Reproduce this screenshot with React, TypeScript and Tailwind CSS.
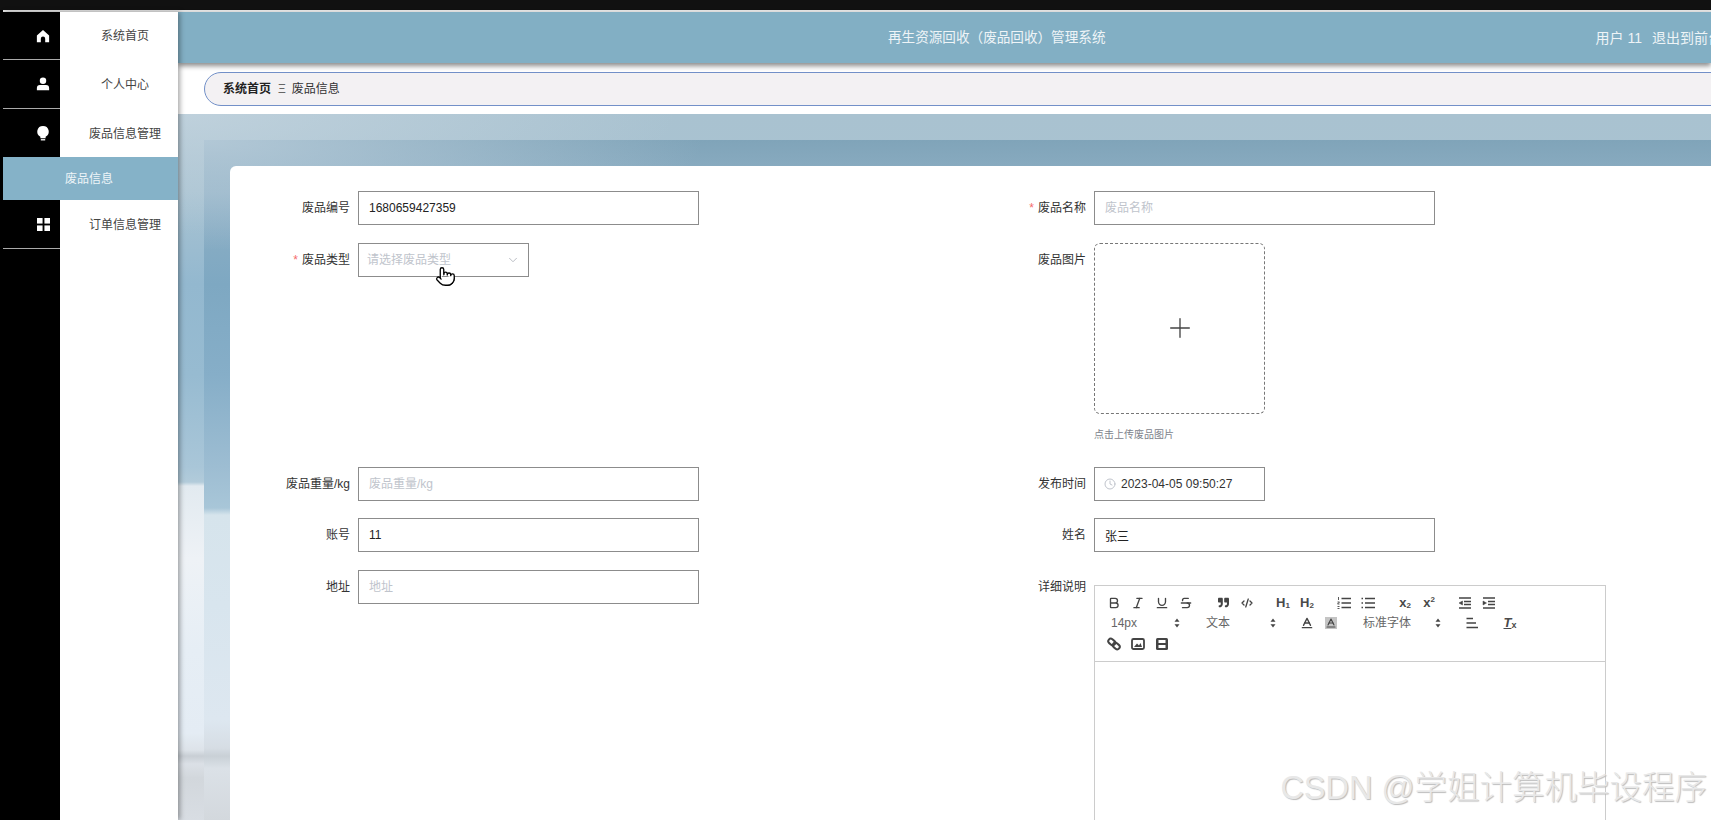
import type { ReactNode } from 'react';
import {
  Baseline,
  Bold,
  ChevronDown,
  Clock,
  CodeXml,
  Italic,
  Plus,
  Pointer,
  Strikethrough,
  Underline,
} from 'lucide-react';
import { FaQuoteRight } from 'react-icons/fa';

const HomeIcon = () => (
  <svg width="14" height="14" viewBox="0 0 16 16" fill="#fff">
    <path d="M8 1 15 7.500V15h-4.500v-4a2.500 2.500 0 0 0-5 0v4H1V7.500Z" />
  </svg>
);

const UserIcon = () => (
  <svg width="14" height="14" viewBox="0 0 16 16" fill="#fff">
    <circle cx="8" cy="4.200" r="3.700" />
    <path d="M1 15v-2.500a3.500 3.500 0 0 1 3.500-3.500h7a3.500 3.500 0 0 1 3.500 3.500V15Z" />
  </svg>
);

const BulbIcon = () => (
  <svg width="14" height="16" viewBox="0 0 16 18" fill="#fff">
    <path d="M8 1a6.500 6.500 0 0 0-3 12.300V15h6v-1.700A6.500 6.500 0 0 0 8 1Z" />
    <rect x="5.500" y="16" width="5" height="1.500" />
  </svg>
);

const GridIcon = () => (
  <svg width="13" height="13" viewBox="0 0 14 14" fill="#fff">
    <rect x="0" y="0" width="6" height="6" />
    <rect x="8" y="0" width="6" height="6" />
    <rect x="0" y="8" width="6" height="6" />
    <rect x="8" y="8" width="6" height="6" />
  </svg>
);

const PickerArrows = () => (
  <svg width="6" height="10" viewBox="0 0 6 10" fill="#444">
    <path d="M3 0.500 5.500 3.800H0.500Z" />
    <path d="M3 9.500 0.500 6.200H5.500Z" />
  </svg>
);

const OrderedListIcon = () => (
  <svg width="14" height="14" viewBox="0 0 14 14" stroke="#444" strokeWidth="1.700" fill="none">
    <path d="M4.500 2.500H14M4.500 7H14M4.500 11.500H14" />
    <path d="M1.500 1v3M0.500 6h2L0.500 8h2M0.500 10.500h2M0.500 12.500h2" strokeWidth="0.900" />
  </svg>
);

const BulletListIcon = () => (
  <svg width="14" height="14" viewBox="0 0 14 14" stroke="#444" strokeWidth="1.700" fill="none">
    <path d="M4 2.500H14M4 7H14M4 11.500H14" />
    <path d="M0.500 2.500H2M0.500 7H2M0.500 11.500H2" />
  </svg>
);

const OutdentIcon = () => (
  <svg width="14" height="14" viewBox="0 0 14 14" stroke="#444" strokeWidth="1.700" fill="none">
    <path d="M1 2H13M6 5.500H13M6 8.500H13M1 12H13" />
    <path d="M4.500 5 1 7 4.500 9Z" fill="#444" strokeWidth="0.500" />
  </svg>
);

const IndentIcon = () => (
  <svg width="14" height="14" viewBox="0 0 14 14" stroke="#444" strokeWidth="1.700" fill="none">
    <path d="M1 2H13M6 5.500H13M6 8.500H13M1 12H13" />
    <path d="M1 5 4.500 7 1 9Z" fill="#444" strokeWidth="0.500" />
  </svg>
);

const AlignIcon = () => (
  <svg width="14" height="14" viewBox="0 0 14 14" stroke="#444" strokeWidth="1.700" fill="none">
    <path d="M1.500 2.500H8M1.500 7H11M1.500 11.500H13" />
  </svg>
);

const LinkIcon = () => (
  <svg width="14" height="14" viewBox="0 0 14 14" stroke="#444" strokeWidth="2" fill="none">
    <rect x="1" y="2.500" width="7.500" height="5" rx="2.500" transform="rotate(40 4.750 5)" />
    <rect x="5.500" y="6.500" width="7.500" height="5" rx="2.500" transform="rotate(40 9.250 9)" />
  </svg>
);

const ImageIcon = () => (
  <svg width="14" height="14" viewBox="0 0 14 14" fill="none">
    <rect x="1" y="2" width="12" height="10" rx="1.500" stroke="#444" strokeWidth="1.800" />
    <path d="M3 10 6 6.500 8 8.500 9.500 6 11 10Z" fill="#444" />
  </svg>
);

const VideoIcon = () => (
  <svg width="14" height="14" viewBox="0 0 14 14">
    <rect x="1" y="1" width="12" height="12" rx="1.500" fill="#444" />
    <rect x="3.500" y="3" width="7" height="3" fill="#fff" />
    <rect x="3.500" y="8" width="7" height="3" fill="#fff" />
  </svg>
);

function MenuRow({ icon, label, tall }: { icon: ReactNode; label: string; tall?: boolean }) {
  return (
    <div className={tall ? 'flex h-[49px]' : 'flex h-[48px]'}>
      <div className="flex w-[57px] items-center justify-end border-b border-[#aaa] bg-black pr-[10px]">{icon}</div>
      <div className="flex flex-1 items-center justify-center bg-white pl-3 text-xs text-[#444]">{label}</div>
    </div>
  );
}

function Sidebar() {
  return (
    <aside className="relative z-20 flex w-[175px] shrink-0 flex-col shadow-[2px_0_5px_rgba(0,0,0,0.35)]">
      <MenuRow icon={<HomeIcon />} label="系统首页" />
      <MenuRow icon={<UserIcon />} label="个人中心" tall />
      <MenuRow icon={<BulbIcon />} label="废品信息管理" tall />
      <div className="-mt-[1px] flex h-[43px] items-center bg-[#85b2c8] pl-[62px] text-xs text-[#eef5f8]">废品信息</div>
      <MenuRow icon={<GridIcon />} label="订单信息管理" tall />
      <div className="flex flex-1">
        <div className="w-[57px] bg-black" />
        <div className="flex-1 bg-white" />
      </div>
    </aside>
  );
}

function Field({ label, required, children }: { label: string; required?: boolean; children: ReactNode }) {
  return (
    <div className="flex items-start gap-2">
      <label className="h-[34px] w-[120px] shrink-0 text-right text-xs leading-[34px] text-[#333]">
        {required && <span className="mr-1 text-[#f56c6c]">*</span>}
        {label}
      </label>
      {children}
    </div>
  );
}

function TextBox({ value, placeholder }: { value?: string; placeholder?: string }) {
  return (
    <input
      readOnly
      defaultValue={value}
      placeholder={placeholder}
      className="h-[34px] w-[341px] border border-[#8c8c8c] bg-white px-[10px] text-xs text-[#222] outline-none placeholder:text-[#c0c4cc]"
    />
  );
}

function ToolBtn({ children }: { children: ReactNode }) {
  return <span className="flex h-5 w-6 shrink-0 items-center justify-center text-[#444]">{children}</span>;
}

function Picker({ label, width }: { label: string; width: string }) {
  return (
    <span className={`flex h-5 shrink-0 items-center justify-between pl-[9px] pr-[3px] text-xs text-[#666] ${width}`}>
      {label}
      <PickerArrows />
    </span>
  );
}

function Script({ base, mark, sup }: { base: string; mark: string; sup?: boolean }) {
  return (
    <span className="flex text-[13px] font-bold leading-none text-[#4a4a4a]">
      {base}
      <span className={sup ? 'text-[8px] leading-[8px]' : 'mt-[6px] text-[8px] leading-[8px]'}>{mark}</span>
    </span>
  );
}

function Editor() {
  const s = { size: 14, strokeWidth: 2.3 };
  return (
    <div className="mt-[15px] w-[512px] border border-[#ccc]">
      <div className="h-[76px] border-b border-[#ccc] px-[7px] pt-[7px]">
        <div className="flex items-center">
          <ToolBtn><Bold {...s} /></ToolBtn>
          <ToolBtn><Italic {...s} /></ToolBtn>
          <ToolBtn><Underline {...s} /></ToolBtn>
          <ToolBtn><Strikethrough {...s} /></ToolBtn>
          <span className="w-[13px]" />
          <ToolBtn><FaQuoteRight size={11} /></ToolBtn>
          <ToolBtn><CodeXml size={12} strokeWidth={2.6} /></ToolBtn>
          <span className="w-[12px]" />
          <ToolBtn><Script base="H" mark="1" /></ToolBtn>
          <ToolBtn><Script base="H" mark="2" /></ToolBtn>
          <span className="w-[13px]" />
          <ToolBtn><OrderedListIcon /></ToolBtn>
          <ToolBtn><BulletListIcon /></ToolBtn>
          <span className="w-[13px]" />
          <ToolBtn><Script base="x" mark="2" /></ToolBtn>
          <ToolBtn><Script base="x" mark="2" sup /></ToolBtn>
          <span className="w-[12px]" />
          <ToolBtn><OutdentIcon /></ToolBtn>
          <ToolBtn><IndentIcon /></ToolBtn>
        </div>
        <div className="flex items-center">
          <Picker label="14px" width="w-[81px]" />
          <span className="w-[14px]" />
          <Picker label="文本" width="w-[82px]" />
          <span className="w-[16px]" />
          <ToolBtn><Baseline size={14} strokeWidth={2.3} /></ToolBtn>
          <ToolBtn>
            <span className="flex bg-[#c4c4c4]"><Baseline size={12} strokeWidth={2.3} /></span>
          </ToolBtn>
          <span className="w-[11px]" />
          <Picker label="标准字体" width="w-[90px]" />
          <span className="w-[16px]" />
          <ToolBtn><AlignIcon /></ToolBtn>
          <span className="w-[14px]" />
          <ToolBtn>
            <span className="flex text-[13px] font-bold leading-none text-[#4a4a4a]">
              <span className="italic underline">T</span>
              <span className="mt-[5px] text-[9px] leading-[9px]">x</span>
            </span>
          </ToolBtn>
        </div>
        <div className="mt-[1px] flex items-center">
          <ToolBtn><LinkIcon /></ToolBtn>
          <ToolBtn><ImageIcon /></ToolBtn>
          <ToolBtn><VideoIcon /></ToolBtn>
        </div>
      </div>
      <div className="h-[300px]" />
    </div>
  );
}

function ProductForm() {
  return (
    <form className="grid grid-cols-[736px_736px] gap-y-[17.5px]">
      <Field label="废品编号">
        <TextBox value="1680659427359" />
      </Field>
      <Field label="废品名称" required>
        <TextBox placeholder="废品名称" />
      </Field>

      <Field label="废品类型" required>
        <div className="relative flex h-[34px] w-[171px] items-center justify-between border border-[#8c8c8c] pl-2 pr-[8px] text-xs text-[#c0c4cc]">
          请选择废品类型
          <ChevronDown size={14} strokeWidth={1.5} className="text-[#b0b4bc]" />
          <Pointer size={21} strokeWidth={1.5} fill="#fff" className="absolute left-[76px] top-[22px] text-black" />
        </div>
      </Field>
      <Field label="废品图片">
        <div>
          <div className="flex h-[171px] w-[171px] items-center justify-center rounded-md border border-dashed border-[#777]">
            <Plus size={32} strokeWidth={1} className="text-[#444]" />
          </div>
          <p className="mt-[10px] h-[25.500px] text-[10px] leading-[21px] text-[#7d838c]">点击上传废品图片</p>
        </div>
      </Field>

      <Field label="废品重量/kg">
        <TextBox placeholder="废品重量/kg" />
      </Field>
      <Field label="发布时间">
        <div className="flex h-[34px] w-[171px] items-center gap-[5px] border border-[#8c8c8c] pl-[9px] text-xs text-[#333]">
          <Clock size={12} className="text-[#c0c4cc]" />
          2023-04-05 09:50:27
        </div>
      </Field>

      <Field label="账号">
        <TextBox value="11" />
      </Field>
      <Field label="姓名">
        <TextBox value="张三" />
      </Field>

      <Field label="地址">
        <TextBox placeholder="地址" />
      </Field>
      <Field label="详细说明">
        <Editor />
      </Field>
    </form>
  );
}

export default function App() {
  return (
    <div className="relative flex h-[820px] w-[1711px] flex-col overflow-hidden bg-black [font-family:'Liberation_Sans','Noto_Sans_CJK_SC',sans-serif]">
      <div className="h-[10px] shrink-0 bg-[#111]" />
      <div className="ml-[3px] h-[2px] shrink-0 bg-[#e4e4e4]" />

      <div className="ml-[3px] flex min-h-0 flex-1">
        <Sidebar />

        <main className="flex min-w-0 flex-1 flex-col">
          <header className="relative z-10 flex h-[51px] shrink-0 items-center whitespace-nowrap bg-[#82afc4] pl-[710px] pt-[2px] text-[#eef4f7] shadow-[0_3px_5px_rgba(0,0,0,0.45)]">
            <span className="text-[13.600px]">再生资源回收（废品回收）管理系统</span>
            <span className="mb-[2px] ml-[490px] text-sm">用户 11</span>
            <span className="mb-[2px] ml-[10px] text-sm">退出到前台</span>
          </header>

          <div className="h-[51px] shrink-0 overflow-hidden bg-white pl-[26px] pt-[9px]">
            <div className="flex h-[34px] w-[1600px] items-center rounded-full border border-[#7290c8] bg-[#f3f1f3] pl-[18px] text-xs text-[#333]">
              <span className="font-bold text-[#222]">系统首页</span>
              <span className="ml-[7px] mr-[6px] text-xs text-[#666]">Ξ</span>
              <span>废品信息</span>
            </div>
          </div>

          <div className="flex min-h-0 flex-1 flex-col bg-[radial-gradient(500px_120px_at_0_0,rgba(200,215,225,0.7),transparent),linear-gradient(to_bottom,#a9c2d0_0,#a9c3d2_78px,#93b8cf_170px,#97bbd1_261px,#a9c6d8_353px,#b2cbda_368px,#e2eaf0_372px,#eef2f6_445px,#e6eef5_536px,#e4ecf4_619px,#dde3e9_636px,#c8ced4_642px,#dbe0e6_650px,#d2d7dc_664px,#d8dde3_706px)] pl-[26px] pt-[26px]">
            <div className="flex min-h-0 flex-1 flex-col bg-[radial-gradient(500px_110px_at_0_0,rgba(195,212,224,0.75),transparent),linear-gradient(to_bottom,#80a4b9_0,#8fb0c5_52px,#7ea8c2_144px,#86aec8_235px,#9dbdd2_327px,#a8c6d8_368px,#d6e4ec_375px,#d8e5ee_465px,#dde7f0_580px,#d6dde4_608px,#c9d0d6_616px,#dbe1e7_628px,#d3d8dd_680px)] pl-[26px] pt-[26px]">
              <section className="min-h-0 flex-1 overflow-hidden rounded-tl-md bg-white pt-[25px]">
                <ProductForm />
              </section>
            </div>
          </div>
        </main>
      </div>

      <span className="absolute bottom-[13px] right-[4px] text-[32.500px] font-light leading-[38px] text-[#e8e8e8] [text-shadow:1px_1px_1px_#bbb]">
        CSDN @学姐计算机毕设程序
      </span>
    </div>
  );
}
